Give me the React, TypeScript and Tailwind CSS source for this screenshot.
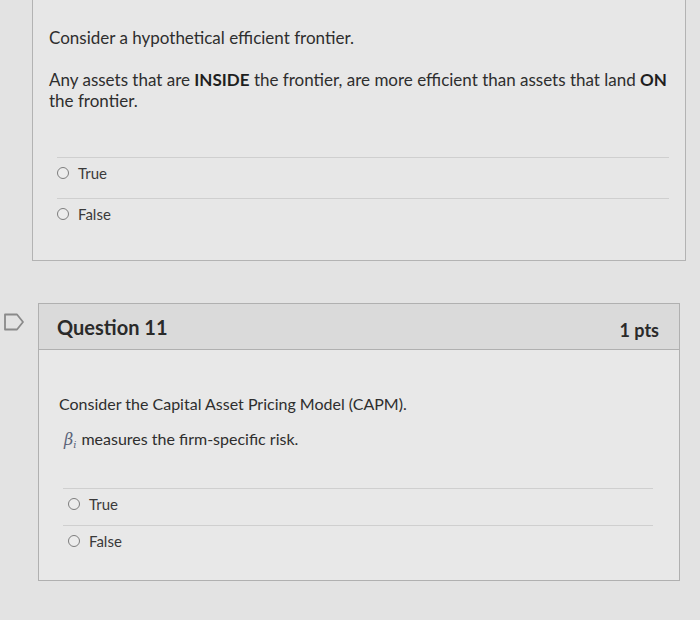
import type { ReactNode } from "react";

function Radio() {
  return <span className="block h-[12px] w-[12px] shrink-0 rounded-full border-[1.5px] border-[#7d7d7d] bg-[#ececec]" />;
}

function AnswerRow({ label, className }: { label: string; className: string }) {
  return (
    <div className={`border-t border-[#cfcfcf] ${className}`}>
      <div className="flex h-[30px] items-center">
        <Radio />
        <span className="ml-[9px] text-[15px] text-[#3a3a3a]">{label}</span>
      </div>
    </div>
  );
}

function BookmarkIcon() {
  return (
    <svg width="22" height="20" viewBox="0 0 22 20" fill="none" aria-hidden="true">
      <path d="M2 2.5 H14 L20 10 L14 17.5 H2 Z" stroke="#8a8a8a" strokeWidth="1.8" strokeLinejoin="round" />
    </svg>
  );
}

function Para({ children, className }: { children: ReactNode; className: string }) {
  return <p className={`text-[#2e2e2e] ${className}`}>{children}</p>;
}

export default function App() {
  return (
    <div
      className="h-[620px] w-[700px] overflow-hidden bg-[#e3e3e3]"
      style={{ fontFamily: "Lato, 'Open Sans', sans-serif" }}
    >
      {/* previous question, cut off at the top */}
      <div className="ml-[32px] h-[261px] w-[654px] border-x border-b border-[#b3b3b3] bg-[#e7e7e7] pl-[16px] pr-[16px] pt-[26px]">
        <Para className="text-[17px] leading-[24px]">Consider a hypothetical efficient frontier.</Para>
        <Para className="mt-[19px] text-[17px] leading-[21px]">
          Any assets that are <strong className="font-bold text-[#1f1f1f]">INSIDE</strong> the frontier, are more efficient
          than assets that land <strong className="font-bold text-[#1f1f1f]">ON</strong> the frontier.
        </Para>
        <div className="mt-[46px] pl-[8px]">
          <AnswerRow label="True" className="h-[41px]" />
          <AnswerRow label="False" className="h-[41px]" />
        </div>
      </div>

      {/* question 11 */}
      <div className="mt-[42px] flex">
        <div className="ml-[3px] mt-[9px] w-[35px] shrink-0">
          <BookmarkIcon />
        </div>
        <div className="w-[642px] border border-[#b0b0b0] bg-[#e8e8e8]">
          <div className="flex h-[46px] items-center justify-between border-b border-[#b0b0b0] bg-[#dadada] pl-[18px] pr-[20px]">
            <h2 className="text-[20px] font-bold text-[#2a2a2a]">Question 11</h2>
            <span className="mt-[8px] text-[18px] font-bold text-[#2a2a2a]">1 pts</span>
          </div>
          <div className="pl-[20px] pr-[26px] pt-[42px] pb-[18px]">
            <Para className="text-[16px] leading-[24px]">Consider the Capital Asset Pricing Model (CAPM).</Para>
            <Para className="mt-[11px] pl-[5px] text-[16px] leading-[24px]">
              <span className="mr-[5px] text-[#5a6278]" style={{ fontFamily: "'DejaVu Serif', serif" }}>
                <i className="text-[16px]">β</i>
                <sub className="text-[10px]">
                  <i>i</i>
                </sub>
              </span>
              measures the firm-specific risk.
            </Para>
            <div className="mt-[36px] pl-[4px]">
              <AnswerRow label="True" className="h-[37px] pl-[5px]" />
              <AnswerRow label="False" className="h-[37px] pl-[5px]" />
            </div>
          </div>
        </div>
      </div>
    </div>
  );
}
